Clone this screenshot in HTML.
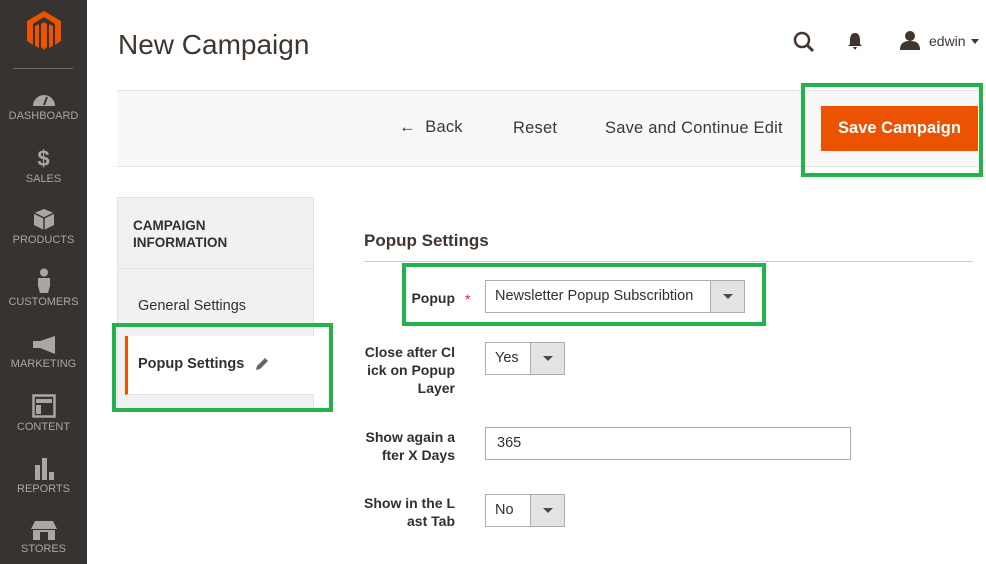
<!DOCTYPE html>
<html><head><style>
*{margin:0;padding:0;box-sizing:border-box}
body{width:986px;height:564px;background:#fff;font-family:"Liberation Sans",sans-serif;color:#303030;position:relative;overflow:hidden}
.a{position:absolute}
.side{left:0;top:0;width:87px;height:564px;background:#373330}
.ni{position:absolute;left:0;width:87px;text-align:center;color:#aaa6a0;font-size:11px}
.ni svg{display:block;margin:0 auto 3px}
.gb{position:absolute;border:4px solid #23b24b}
.lbl{position:absolute;right:531px;text-align:right;font-size:14px;font-weight:bold;color:#303030;line-height:18px}
.sel{position:absolute;border:1px solid #adadad;background:#fff;height:33px;font-size:14.5px;line-height:31px;padding-left:9px}
.sel .dd{position:absolute;right:0;top:0;width:34px;height:31px;background:#e3e3e3;border-left:1px solid #adadad}
.sel .dd:after{content:"";position:absolute;left:12px;top:13px;border:5px solid transparent;border-top:5px solid #514943;border-bottom:0}
.tb{position:absolute;font-size:16.5px;color:#41362f;font-weight:bold;-webkit-text-stroke:0;letter-spacing:0.2px}
</style></head><body>
<div class="a side">
<svg class="a" style="left:26px;top:11px" width="36" height="40" viewBox="0 0 36 40"><path d="M18 0L35 10V30L29 34V13L18 6L7 13V34L1 30V10Z" fill="#eb5202"/><path d="M15 13L18 11L21 13V36L18 39L15 36Z" fill="#eb5202"/><path d="M9 15L13 13V37L9 35Z M27 15L23 13V37L27 35Z" fill="#eb5202"/></svg>
<div class="a" style="left:13px;top:68px;width:60px;height:1px;background:#736963"></div>
<div class="ni" style="top:90px"><svg width="24" height="17"><path d="M1 16A11 11 0 0 1 23 16Z" fill="#aaa6a0"/><path d="M12 15L15 7" stroke="#373330" stroke-width="2"/></svg>DASHBOARD</div>
<div class="ni" style="top:147px"><div style="font-size:22px;font-weight:bold;line-height:24px;margin-bottom:2px">$</div>SALES</div>
<div class="ni" style="top:208px"><svg width="22" height="23"><path d="M11 1L21 5V17L11 22L1 17V5Z" fill="#aaa6a0"/><path d="M1 5L11 10L21 5M11 10V22" stroke="#373330" stroke-width="1.5" fill="none"/></svg>PRODUCTS</div>
<div class="ni" style="top:268px"><svg width="14" height="25"><circle cx="7" cy="4.5" r="4" fill="#aaa6a0"/><path d="M1 10H13V18L11 25H3L1 18Z" fill="#aaa6a0"/></svg>CUSTOMERS</div>
<div class="ni" style="top:335px"><svg width="26" height="20"><path d="M2 6H9L24 1V19L9 13H2Z" fill="#aaa6a0"/></svg>MARKETING</div>
<div class="ni" style="top:394px"><svg width="24" height="24"><rect x="1.5" y="1.5" width="21" height="21" fill="none" stroke="#aaa6a0" stroke-width="2.5"/><rect x="4" y="5" width="16" height="4" fill="#aaa6a0"/><rect x="4" y="11" width="5" height="9" fill="#aaa6a0"/></svg>CONTENT</div>
<div class="ni" style="top:456px"><svg width="22" height="24"><rect x="2" y="9" width="5" height="15" fill="#aaa6a0"/><rect x="9" y="2" width="5" height="22" fill="#aaa6a0"/><rect x="16" y="16" width="5" height="8" fill="#aaa6a0"/></svg>REPORTS</div>
<div class="ni" style="top:520px"><svg width="26" height="20"><path d="M4 1H22L26 9H0Z" fill="#aaa6a0"/><rect x="2" y="10" width="22" height="10" fill="#aaa6a0"/><rect x="9" y="12" width="8" height="8" fill="#373330"/></svg>STORES</div>
</div>
<div class="a" style="left:118px;top:29px;font-size:28px;color:#41362f">New Campaign</div>
<svg class="a" style="left:793px;top:31px" width="22" height="22"><circle cx="9" cy="9" r="7" fill="none" stroke="#41362f" stroke-width="2.5"/><path d="M14 14L20 20" stroke="#41362f" stroke-width="3"/></svg>
<svg class="a" style="left:847px;top:32px" width="16" height="18"><path d="M8 1C4 1 3 5 3 8V12L1 14H15L13 12V8C13 5 12 1 8 1Z M6 15H10L8 18Z" fill="#41362f"/></svg>
<svg class="a" style="left:900px;top:30px" width="20" height="20"><circle cx="10" cy="6" r="5" fill="#41362f"/><path d="M0 20C0 13 4 11 10 11C16 11 20 13 20 20Z" fill="#41362f"/></svg>
<div class="a" style="left:929px;top:33px;font-size:14px;color:#41362f">edwin</div>
<div class="a" style="left:971px;top:39px;border:4px solid transparent;border-top:5px solid #41362f"></div>
<div class="a" style="left:117px;top:90px;width:866px;height:77px;background:#f8f8f8;border-top:1px solid #e3e3e3;border-bottom:1px solid #e3e3e3"></div>
<div class="tb" style="left:399px;top:118px;font-weight:normal">&#8592;&nbsp;&nbsp;Back</div>
<div class="tb" style="left:513px;top:119px;font-weight:normal">Reset</div>
<div class="tb" style="left:605px;top:119px;font-weight:normal">Save and Continue Edit</div>
<div class="a" style="left:821px;top:106px;width:157px;height:45px;background:#eb5202;color:#fff;font-size:16.5px;font-weight:bold;text-align:center;line-height:45px">Save Campaign</div>
<div class="gb" style="left:801px;top:83px;width:182px;height:94px"></div>
<div class="a" style="left:117px;top:197px;width:197px;height:212px;background:#f1f1f1;border:1px solid #e3e3e3"></div>
<div class="a" style="left:133px;top:217px;font-size:13.5px;font-weight:bold;line-height:17px;color:#303030">CAMPAIGN<br>INFORMATION</div>
<div class="a" style="left:118px;top:268px;width:195px;height:1px;background:#e3e3e3"></div>
<div class="a" style="left:138px;top:298px;font-size:14.5px;color:#303030">General Settings</div>
<div class="a" style="left:125px;top:336px;width:189px;height:59px;background:#fff;border-left:3px solid #eb5202;border-bottom:1px solid #e3e3e3"></div>
<div class="a" style="left:138px;top:356px;font-size:14.5px;font-weight:bold">Popup Settings</div>
<svg class="a" style="left:255px;top:357px" width="14" height="14"><path d="M1 13L2 9L10 1L13 4L5 12Z" fill="#666"/></svg>
<div class="gb" style="left:112px;top:323px;width:221px;height:89px"></div>
<div class="a" style="left:364px;top:231px;font-size:17px;font-weight:bold;color:#41362f">Popup Settings</div>
<div class="a" style="left:364px;top:261px;width:609px;height:1px;background:#ccc"></div>
<div class="lbl" style="top:289px">Popup</div>
<div class="a" style="left:465px;top:291px;color:#e22626;font-size:14px">*</div>
<div class="sel" style="left:485px;top:280px;width:260px">Newsletter Popup Subscribtion<div class="dd"></div></div>
<div class="gb" style="left:402px;top:263px;width:364px;height:63px"></div>
<div class="lbl" style="top:343px">Close after Cl<br>ick on Popup<br>Layer</div>
<div class="sel" style="left:485px;top:342px;width:80px">Yes<div class="dd"></div></div>
<div class="lbl" style="top:428px">Show again a<br>fter X Days</div>
<div class="sel" style="left:485px;top:427px;width:366px;padding-left:11px">365</div>
<div class="lbl" style="top:494px">Show in the L<br>ast Tab</div>
<div class="sel" style="left:485px;top:494px;width:80px">No<div class="dd"></div></div>
</body></html>
